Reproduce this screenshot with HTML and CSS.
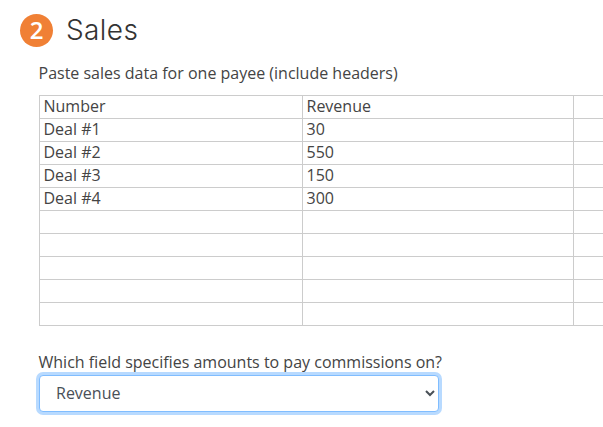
FILE: index.html
```html
<!DOCTYPE html>
<html lang="en">
  <head>
    <meta charset="UTF-8" />
    <meta name="viewport" content="width=device-width, initial-scale=1.0" />
    <title>Sales</title>
    <link rel="stylesheet" href="styles.css">
  </head>
  <body>
    <div class="step-head">
      <span class="step-num">2</span>
      <h2 class="step-title">Sales</h2>
    </div>
    <div class="step-body">
      <p class="hint">Paste sales data for one payee (include headers)</p>
      <table class="sheet">
        <tr><td class="col-a">Number</td><td class="col-b">Revenue</td><td class="col-c"></td></tr>
        <tr><td>Deal #1</td><td>30</td><td></td></tr>
        <tr><td>Deal #2</td><td>550</td><td></td></tr>
        <tr><td>Deal #3</td><td>150</td><td></td></tr>
        <tr><td>Deal #4</td><td>300</td><td></td></tr>
        <tr><td></td><td></td><td></td></tr>
        <tr><td></td><td></td><td></td></tr>
        <tr><td></td><td></td><td></td></tr>
        <tr><td></td><td></td><td></td></tr>
        <tr><td></td><td></td><td></td></tr>
      </table>
      <label class="field-label" for="amount-field">Which field specifies amounts to pay commissions on?</label>
      <select class="field-select" id="amount-field">
        <option>Revenue</option>
        <option>Number</option>
      </select>
    </div>
  </body>
</html>
```

FILE: styles.css
```css
html,
body {
  overflow: hidden;
}
body {
  margin: 0;
  height: 427px;
  background-color: white;
  color: #444;
  font-family: "Open Sans", sans-serif;
  font-size: 16px;
}
.step-head {
  display: flex;
  align-items: center;
  padding: 13px 0 0 20px;
  height: 34px;
}
.step-num {
  width: 33px;
  height: 33px;
  border-radius: 50%;
  background-color: #f08035;
  color: white;
  font-size: 24px;
  font-weight: 600;
  line-height: 32px;
  text-align: center;
}
.step-title {
  margin: 0 0 0 13px;
  font-family: Inter, sans-serif;
  font-size: 28px;
  font-weight: 300;
  letter-spacing: 0.4px;
  color: #333;
}
.step-body {
  padding-left: 39px;
}
.hint {
  margin: 15px 0 0 -0.5px;
  line-height: 22px;
}
.sheet {
  margin-top: 11px;
  width: 600px;
  border-collapse: collapse;
  table-layout: fixed;
}
.sheet td {
  height: 21px;
  padding: 0 3.5px 1px;
  border: 1px solid #ccc;
  line-height: 21px;
  color: #444;
}
.col-a {
  width: 255px;
}
.col-b {
  width: 263px;
}
.field-label {
  display: block;
  margin: 25px 0 0 -0.5px;
  line-height: 22px;
}
.field-select {
  display: block;
  width: 400px;
  height: 37px;
  margin-top: 2px;
  padding: 0 12px 2px;
  background-color: white;
  border: 1px solid #80bdff;
  border-radius: 4px;
  box-shadow: 0 0 0 3px #b8daff;
  color: #495057;
  font-family: "Open Sans", sans-serif;
  font-size: 16px;
  outline: none;
}
```
